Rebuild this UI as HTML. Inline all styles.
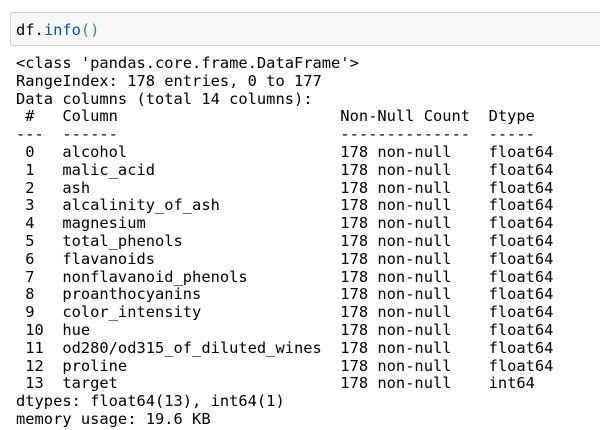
<!DOCTYPE html>
<html><head><style>
html,body{margin:0;padding:0;background:#fff;width:600px;height:430px;overflow:hidden}
.in{position:absolute;left:10px;top:12px;width:600px;height:32px;background:#f7f7f7;border:1px solid #cfcfcf;border-radius:2px}
pre{margin:0;font-family:"DejaVu Sans Mono","Liberation Mono",monospace;font-size:15.4px;color:#000;position:absolute;left:16px}
.code{top:20px;line-height:20px}
.out{top:55px;line-height:17.8px}
.b{color:#0055aa}.g{color:#3a9f3a}
</style></head><body>
<div class="in"></div>
<pre class="code">df.<span class="b">info</span><span class="g">()</span></pre>
<pre class="out">&lt;class 'pandas.core.frame.DataFrame'&gt;
RangeIndex: 178 entries, 0 to 177
Data columns (total 14 columns):
 #   Column                        Non-Null Count  Dtype  
---  ------                        --------------  -----  
 0   alcohol                       178 non-null    float64
 1   malic_acid                    178 non-null    float64
 2   ash                           178 non-null    float64
 3   alcalinity_of_ash             178 non-null    float64
 4   magnesium                     178 non-null    float64
 5   total_phenols                 178 non-null    float64
 6   flavanoids                    178 non-null    float64
 7   nonflavanoid_phenols          178 non-null    float64
 8   proanthocyanins               178 non-null    float64
 9   color_intensity               178 non-null    float64
 10  hue                           178 non-null    float64
 11  od280/od315_of_diluted_wines  178 non-null    float64
 12  proline                       178 non-null    float64
 13  target                        178 non-null    int64  
dtypes: float64(13), int64(1)
memory usage: 19.6 KB</pre>
</body></html>
